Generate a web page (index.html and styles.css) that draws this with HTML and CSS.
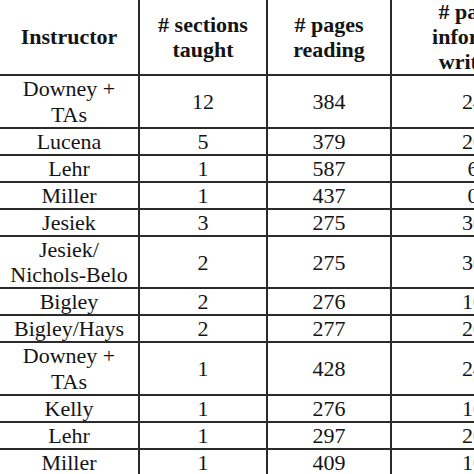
FILE: index.html
```html
<!DOCTYPE html>
<html>
<head>
<meta charset="utf-8">
<link rel="stylesheet" href="styles.css">
</head>
<body>
<table class="data">
  <colgroup>
    <col class="c0"><col class="c1"><col class="c2"><col class="c3">
  </colgroup>
  <thead>
    <tr class="head">
      <th>Instructor</th>
      <th># sections<br>taught</th>
      <th># pages<br>reading</th>
      <th># pages<br>informal<br>writing</th>
    </tr>
  </thead>
  <tbody>
    <tr class="dbl"><td>Downey +<br>TAs</td><td>12</td><td>384</td><td>24</td></tr>
    <tr><td>Lucena</td><td>5</td><td>379</td><td>20</td></tr>
    <tr><td>Lehr</td><td>1</td><td>587</td><td>6</td></tr>
    <tr><td>Miller</td><td>1</td><td>437</td><td>0</td></tr>
    <tr><td>Jesiek</td><td>3</td><td>275</td><td>30</td></tr>
    <tr class="dbl2"><td>Jesiek/<br>Nichols-Belo</td><td>2</td><td>275</td><td>30</td></tr>
    <tr><td>Bigley</td><td>2</td><td>276</td><td>10</td></tr>
    <tr><td>Bigley/Hays</td><td>2</td><td>277</td><td>20</td></tr>
    <tr class="dbl"><td>Downey +<br>TAs</td><td>1</td><td>428</td><td>24</td></tr>
    <tr><td>Kelly</td><td>1</td><td>276</td><td>10</td></tr>
    <tr><td>Lehr</td><td>1</td><td>297</td><td>20</td></tr>
    <tr><td>Miller</td><td>1</td><td>409</td><td>10</td></tr>
  </tbody>
</table>
</body>
</html>
```

FILE: styles.css
```css
html, body {
  margin: 0;
  padding: 0;
  background: #ffffff;
  overflow: hidden;
}

body {
  width: 474px;
  height: 474px;
}

.data {
  border-collapse: collapse;
  table-layout: fixed;
  width: 556px;
  margin-top: -3px;
  margin-left: -2px;
  font-family: "Liberation Serif", "Times New Roman", serif;
  font-size: 22px;
  line-height: 25px;
  color: #141414;
}

.c0 { width: 140px; }
.c1 { width: 128px; }
.c2 { width: 124px; }
.c3 { width: 164px; }

.data th,
.data td {
  border: 2px solid #2a2a2a;
  padding: 0;
  text-align: center;
  vertical-align: middle;
}

.data th {
  font-weight: bold;
  height: 75px;
}

.data td {
  height: 25px;
}

.data .dbl td {
  height: 51px;
  line-height: 25.5px;
}

.data .dbl2 td {
  height: 50px;
}
```
